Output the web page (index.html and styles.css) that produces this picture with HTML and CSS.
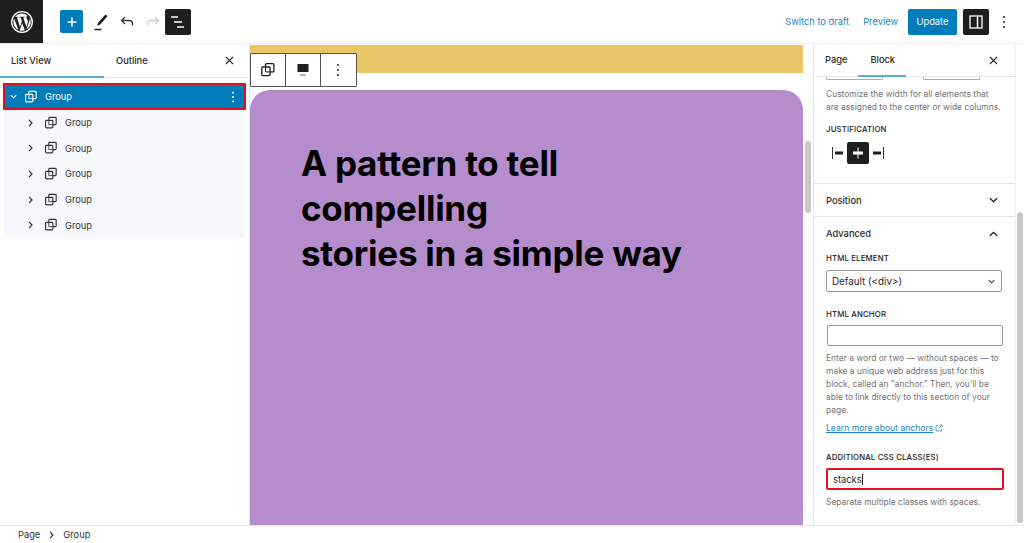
FILE: index.html
```html
<!DOCTYPE html>
<html lang="en">
<head>
<meta charset="utf-8">
<title>Edit Page</title>
<link rel="stylesheet" href="styles.css">
</head>
<body>
<svg class="defs" width="0" height="0" aria-hidden="true">
  <symbol id="stack" viewBox="0 0 16 16"><path d="M5.5 4.8V2.6c0-.6.4-1 1-1h6.4c.6 0 1 .4 1 1v6.3c0 .6-.4 1-1 1h-2.200M2.800 5h6.300c.6 0 1 .4 1 1v6.600c0 .6-.4 1-1 1H2.800c-.6 0-1-.4-1-1V6c0-.6.4-1 1-1z" fill="none" stroke="currentColor" stroke-width="1.300"/><path d="M5.500 5v4.900h4.600" fill="none" stroke="currentColor" stroke-width="1"/></symbol>
  <symbol id="dots" viewBox="0 0 4 16"><circle cx="2" cy="3" r="1.100"/><circle cx="2" cy="8" r="1.100"/><circle cx="2" cy="13" r="1.100"/></symbol>
  <symbol id="cross" viewBox="0 0 10 10"><path d="M1 1l8 8M9 1L1 9" fill="none" stroke="currentColor" stroke-width="1.400"/></symbol>
  <symbol id="right" viewBox="0 0 6 10"><path d="M1.200 1.200L4.800 5 1.200 8.800" fill="none" stroke="currentColor" stroke-width="1.500"/></symbol>
  <symbol id="down" viewBox="0 0 10 6"><path d="M1 1l4 3.800L9 1" fill="none" stroke="currentColor" stroke-width="1.500"/></symbol>
</svg>
<div class="app">
  <header class="topbar">
    <div class="logo">
      <svg width="24" height="24" viewBox="0 0 24 24"><circle cx="12" cy="12" r="10.300" fill="none" stroke="#fff" stroke-width="1.300"/><path fill="#fff" d="M3.400 12c0 3.400 2 6.300 4.900 7.700L4.200 8.500A8.600 8.600 0 0 0 3.400 12zm14.400-.4c0-1.100-.4-1.800-.7-2.400-.4-.7-.8-1.200-.8-1.900 0-.7.500-1.400 1.300-1.400h.1A8.600 8.600 0 0 0 5 6.800h.6c.9 0 2.300-.1 2.300-.1.500 0 .5.700 0 .8 0 0-.5.100-1 .1l3.100 9.300 1.900-5.700-1.300-3.600c-.5 0-.9-.1-.9-.1-.5 0-.4-.8 0-.8 0 0 1.400.1 2.300.1h2.300c.5 0 .5.700 0 .8 0 0-.5.100-1 .1l3.100 9.200.9-2.900c.4-1.100.6-2 .5-2.400zM12.200 12.900l-2.600 7.500a8.700 8.700 0 0 0 5.300-.1l-.1-.1zm7.400-4.900l.1.900c0 .9-.2 1.800-.7 3.100l-2.600 7.600A8.600 8.600 0 0 0 19.600 8z"/></svg>
    </div>
    <div class="tools">
      <button class="add" type="button"><svg width="12" height="12" viewBox="0 0 12 12"><path d="M6 1.500v9M1.500 6h9" stroke="#fff" stroke-width="1.500"/></svg></button>
      <svg class="tool-pen" width="16" height="18" viewBox="0 0 16 18"><path d="M12.500 1.500l2 1.800-7.300 8.200-3 1.200.9-3z" fill="#1e1e1e"/><path d="M1.500 16.500h7" stroke="#1e1e1e" stroke-width="1.500"/></svg>
      <svg class="tool-undo" width="14" height="12" viewBox="0 0 14 12"><path d="M5 1L1.500 4.500 5 8M1.500 4.500h7.500c2 0 3.500 1.400 3.500 3.500v1.500" fill="none" stroke="#333" stroke-width="1.300"/></svg>
      <svg class="tool-redo" width="14" height="12" viewBox="0 0 14 12"><path d="M9 1l3.500 3.500L9 8M12.500 4.500H5C3 4.500 1.500 5.900 1.500 8v1.500" fill="none" stroke="#ccc" stroke-width="1.300"/></svg>
      <button class="listview" type="button"><svg width="14" height="12" viewBox="0 0 14 12"><path d="M0 1h7M3 6h8M6 11h7" stroke="#fff" stroke-width="1.500"/></svg></button>
    </div>
    <div class="actions">
      <a class="link draft">Switch to draft</a>
      <a class="link preview">Preview</a>
      <button class="update" type="button">Update</button>
      <button class="sidebar-toggle" type="button"><svg width="14" height="14" viewBox="0 0 14 14"><rect x="1" y="1" width="12" height="12" fill="none" stroke="#fff" stroke-width="1.300"/><path d="M8.500 1v12" stroke="#fff" stroke-width="1.500"/></svg></button>
      <svg class="more" width="4" height="16" fill="#333"><use href="#dots"/></svg>
    </div>
  </header>

  <main class="main">
    <aside class="listpanel">
      <div class="tabs">
        <span class="tab tab-active">List View</span>
        <span class="tab">Outline</span>
        <svg class="tab-close" width="9" height="9"><use href="#cross"/></svg>
      </div>
      <div class="tree">
        <div class="row-selected">
          <svg class="chev-down" width="7" height="5"><use href="#down"/></svg>
          <svg class="stack" width="14" height="14"><use href="#stack"/></svg>
          <span class="row-label">Group</span>
          <svg class="row-dots" width="4" height="14" fill="#fff"><use href="#dots"/></svg>
        </div>
        <div class="rows">
          <div class="row"><svg class="chev" width="5" height="8"><use href="#right"/></svg><svg class="stack" width="14" height="14"><use href="#stack"/></svg><span class="row-label">Group</span></div>
          <div class="row"><svg class="chev" width="5" height="8"><use href="#right"/></svg><svg class="stack" width="14" height="14"><use href="#stack"/></svg><span class="row-label">Group</span></div>
          <div class="row"><svg class="chev" width="5" height="8"><use href="#right"/></svg><svg class="stack" width="14" height="14"><use href="#stack"/></svg><span class="row-label">Group</span></div>
          <div class="row"><svg class="chev" width="5" height="8"><use href="#right"/></svg><svg class="stack" width="14" height="14"><use href="#stack"/></svg><span class="row-label">Group</span></div>
          <div class="row"><svg class="chev" width="5" height="8"><use href="#right"/></svg><svg class="stack" width="14" height="14"><use href="#stack"/></svg><span class="row-label">Group</span></div>
        </div>
      </div>
    </aside>

    <section class="canvas">
      <div class="canvas-inner">
        <div class="yellow"></div>
        <div class="hero">
          <h1>A pattern to tell<br>compelling<br>stories in a simple way</h1>
        </div>
      </div>
      <div class="block-toolbar">
        <div class="bt-cell"><svg width="16" height="16" color="#1e1e1e"><use href="#stack"/></svg></div>
        <div class="bt-cell"><svg width="14" height="14" viewBox="0 0 14 14"><rect x="1.500" y="1" width="11" height="8" fill="#1e1e1e"/><path d="M4 12h6" stroke="#999" stroke-width="1.500"/></svg></div>
        <div class="bt-cell bt-last"><svg width="4" height="16" fill="#333"><use href="#dots"/></svg></div>
      </div>
      <div class="canvas-gutter"><div class="canvas-thumb"></div></div>
    </section>

    <aside class="settings">
      <div class="tabs settings-tabs">
        <span class="stab">Page</span>
        <span class="stab stab-active">Block</span>
        <svg class="tab-close" width="9" height="9"><use href="#cross"/></svg>
      </div>
      <div class="settings-body">
        <section class="panel panel-layout">
          <div class="stub-row"><div class="stub"></div><div class="stub"></div></div>
          <p class="help help-layout">Customize the width for all elements that are assigned to the center or wide columns.</p>
          <div class="cap">JUSTIFICATION</div>
          <div class="just">
            <svg width="16" height="16" viewBox="0 0 16 16"><path d="M2.500 2v12" stroke="#333"/><rect x="5" y="6.500" width="8" height="3" fill="#1e1e1e"/></svg>
            <span class="just-on"><svg width="14" height="14" viewBox="0 0 14 14"><path d="M7 1.500v11" stroke="#fff" stroke-width="1"/><rect x="2" y="5.500" width="10" height="3" fill="#fff"/></svg></span>
            <svg width="16" height="16" viewBox="0 0 16 16"><path d="M13.500 2v12" stroke="#333"/><rect x="3" y="6.500" width="8" height="3" fill="#1e1e1e"/></svg>
          </div>
        </section>
        <section class="panel panel-head">
          <span class="panel-title">Position</span>
          <svg width="9" height="6" color="#1e1e1e"><use href="#down"/></svg>
        </section>
        <section class="panel panel-adv">
          <div class="panel-head-in">
            <span class="panel-title">Advanced</span>
            <svg class="up" width="9" height="6" color="#1e1e1e"><use href="#down"/></svg>
          </div>
          <div class="cap cap-el">HTML ELEMENT</div>
          <div class="select"><span>Default (&lt;div&gt;)</span><svg width="7" height="5" color="#333"><use href="#down"/></svg></div>
          <div class="cap cap-anchor">HTML ANCHOR</div>
          <div class="input"></div>
          <p class="help help-anchor">Enter a word or two — without spaces — to make a unique web address just for this block, called an "anchor." Then, you'll be able to link directly to this section of your page.</p>
          <p class="learn"><a>Learn more about anchors</a><svg width="8" height="8" viewBox="0 0 8 8"><path d="M3 1.500H1v5.500h5.500V5M4.500 1H7v2.500M7 1L3.500 4.500" fill="none" stroke="#3a8fc7" stroke-width=".8"/></svg></p>
          <div class="cap cap-css">ADDITIONAL CSS CLASS(ES)</div>
          <div class="input-red"><span>stacks</span><i class="caret"></i></div>
          <p class="help help-sep">Separate multiple classes with spaces.</p>
        </section>
      </div>
    </aside>
    <div class="page-gutter"><div class="page-thumb"></div></div>
  </main>

  <footer class="crumbs">
    <span>Page</span>
    <svg width="5" height="8" color="#333"><use href="#right"/></svg>
    <span>Group</span>
  </footer>
</div>
</body>
</html>
```
FILE: styles.css
```css
* { box-sizing: border-box; }
html, body { margin: 0; height: 100%; overflow: hidden; background: #fff; }
body { font-family: Inter, "Liberation Sans", sans-serif; color: #2a2a2a; font-size: 9.3px; }
button { border: 0; padding: 0; font: inherit; display: flex; align-items: center; justify-content: center; }
p { margin: 0; }
.defs { position: absolute; }
.app { width: 1024px; height: 543px; display: flex; flex-direction: column; }

.topbar { height: 44px; flex: none; display: flex; align-items: flex-start; border-bottom: 1px solid #eee; }
.logo { width: 43px; height: 43px; background: #1e1e1e; display: flex; align-items: center; justify-content: center; flex: none; }
.tools { display: flex; align-items: center; height: 43px; padding-left: 17px; }
.add { width: 23px; height: 23px; background: #007cba; border-radius: 2px; }
.tool-pen { margin-left: 10px; }
.tool-undo { margin-left: 11px; }
.tool-redo { margin-left: 12px; }
.listview { width: 26px; height: 26px; background: #1e1e1e; border-radius: 2px; margin-left: 5px; }
.actions { margin-left: auto; height: 43px; display: flex; align-items: center; padding-right: 18px; }
.link { color: #1d86c0; font-size: 9.3px; }
.draft { margin-right: 14px; }
.preview { margin-right: 10px; }
.update { width: 49px; height: 26px; background: #007cba; color: #fff; border-radius: 2px; font-size: 9.3px; }
.sidebar-toggle { width: 26px; height: 26px; background: #1e1e1e; border-radius: 2px; margin-left: 6px; }
.more { margin-left: 13px; }

.main { flex: 1; min-height: 0; display: flex; }

.listpanel { width: 250px; flex: none; border-right: 1px solid #e4e4e4; }
.tabs { height: 34px; display: flex; align-items: center; border-bottom: 1px solid #e6e6e6; }
.tab { width: 104px; height: 34px; line-height: 33px; padding-left: 11px; font-size: 9.3px; font-weight: 500; color: #2a2a2a; }
.tab + .tab { padding-left: 12px; }
.tab-active { border-bottom: 2px solid #5aaed8; }
.tab-close { color: #1e1e1e; margin-left: auto; margin-right: 15px; }
.tree { padding: 5px 3px 0 3px; }
.row-selected { height: 27px; border: 2px solid #e8101f; background: #007cba; color: #fff; display: flex; align-items: center; padding-left: 5px; }
.chev-down { margin-right: 7px; }
.row-selected .stack { margin-right: 7px; }
.row-label { font-size: 9.3px; }
.row-dots { margin-left: auto; margin-right: 9px; }
.rows { margin: 0 1px; background: #f5f9fd; }
.row { height: 25.6px; display: flex; align-items: center; padding-left: 24px; color: #333; }
.chev { margin-right: 11px; }
.row .stack { margin-right: 7px; }

.canvas { flex: none; width: 564px; position: relative; display: flex; border-right: 1px solid #e6e6e6; }
.canvas-inner { width: 553px; padding-top: 1px; overflow: hidden; }
.yellow { height: 28px; background: #eac668; }
.hero { margin-top: 17px; height: 500px; background: #b58dcd; border-radius: 20px 20px 0 0; padding: 51px 51px; }
.hero h1 { margin: 0; font-family: Inter, "Liberation Sans", sans-serif; font-size: 35px; line-height: 45px; font-weight: 700; color: #000; letter-spacing: -.25px; }
.canvas-gutter { width: 10px; padding: 97px 0 0 2px; }
.canvas-thumb { width: 6px; height: 72px; background: #c8c8c8; border-radius: 3px; }
.block-toolbar { position: absolute; left: 0; top: 9px; height: 34px; display: flex; background: #fff; border: 1px solid #555; border-radius: 1px; }
.bt-cell { width: 35px; display: flex; align-items: center; justify-content: center; border-right: 1px solid #555; }
.bt-last { border-right: 0; padding-right: 2px; }

.settings { width: 202px; flex: none; border-right: 1px solid #eee; }
.settings-tabs { height: 33px; }
.settings-tabs .tab-close { margin-right: 17px; }
.stab { font-size: 9.3px; font-weight: 500; height: 33px; line-height: 32px; padding: 0 11px; }
.stab-active { border-bottom: 2px solid #5aaed8; padding: 0 11px 0 12px; }
.panel { padding: 0 12px; border-bottom: 1px solid #e6e6e6; }
.stub-row { display: flex; gap: 40px; height: 3px; }
.stub { width: 57px; height: 3px; border: 1px solid #aaa; border-top: 0; border-radius: 0 0 2px 2px; }
.help { font-size: 8.45px; line-height: 13px; color: #757575; }
.help-layout { margin-top: 8px; }
.cap { font-size: 7.8px; font-weight: 500; letter-spacing: .15px; color: #222; text-transform: uppercase; }
.panel-layout .cap { margin-top: 10px; }
.just { display: flex; align-items: center; margin-top: 8px; padding: 0 0 0 4px; height: 22px; margin-bottom: 19px; }
.just-on { width: 22px; height: 22px; background: #1e1e1e; border-radius: 2px; display: flex; align-items: center; justify-content: center; margin: 0 1px; }
.panel-head { height: 33px; display: flex; align-items: center; justify-content: space-between; padding-right: 17px; }
.panel-title { font-size: 9.3px; font-weight: 500; }
.panel-adv { border-bottom: 0; }
.panel-head-in { display: flex; align-items: center; justify-content: space-between; height: 33px; padding-right: 5px; }
.up { transform: rotate(180deg); }
.cap-el { margin-top: 3px; }
.select { margin-top: 7px; width: 176px; height: 22px; border: 1px solid #999; border-radius: 2px; display: flex; align-items: center; justify-content: space-between; padding: 0 6px 0 5px; font-size: 9.8px; }
.cap-anchor { margin-top: 17px; }
.input { margin-top: 6px; margin-left: 1px; width: 176px; height: 21px; border: 1px solid #999; border-radius: 2px; }
.help-anchor { margin-top: 6px; }
.learn { margin-top: 6px; display: flex; align-items: center; gap: 2px; font-size: 8.6px; }
.learn a { color: #1d86c0; text-decoration: underline; }
.cap-css { margin-top: 19px; }
.input-red { margin-top: 6px; width: 178px; height: 22px; border: 2px solid #e8101f; border-radius: 2px; display: flex; align-items: center; padding-left: 5px; font-size: 9.3px; }
.caret { width: 1px; height: 11px; background: #222; }
.help-sep { margin-top: 6px; }

.page-gutter { width: 8px; flex: none; padding: 168px 0 0 1px; }
.page-thumb { width: 6px; height: 311px; background: #c8c8c8; border-radius: 3px; }

.crumbs { height: 18px; flex: none; border-top: 1px solid #e6e6e6; display: flex; align-items: center; padding-left: 18px; gap: 9px; font-size: 9.3px; color: #333; }
```
